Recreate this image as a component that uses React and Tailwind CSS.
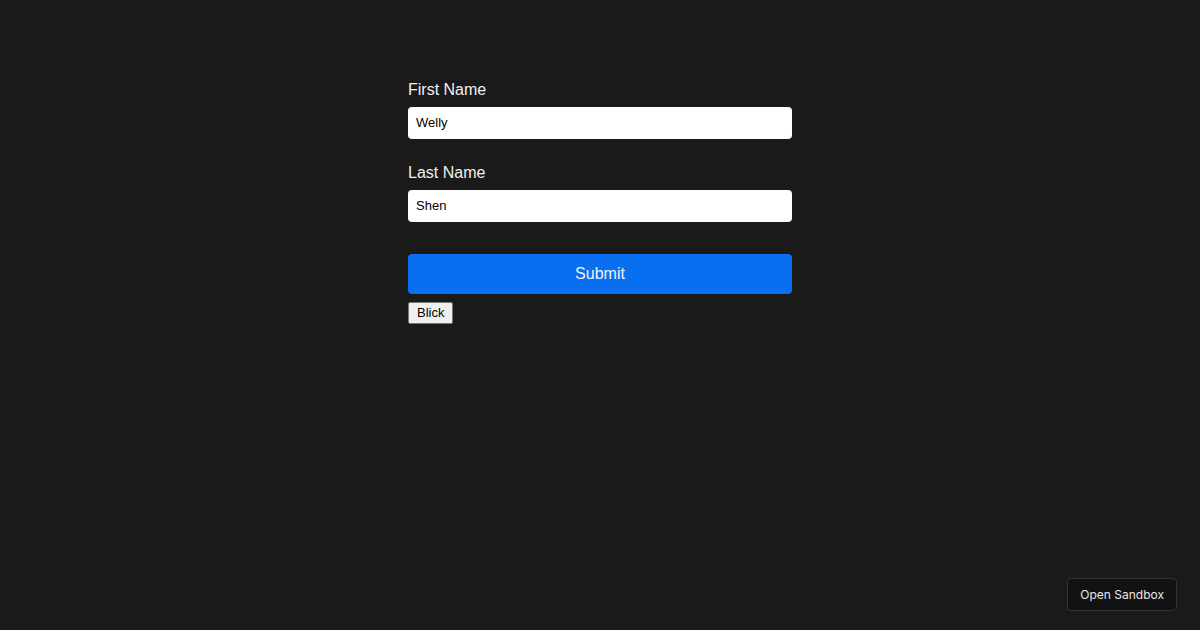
export default function App() {
  return (
    <div className="min-h-screen w-full bg-[#1a1a1a] relative" style={{ fontFamily: '"Liberation Sans", Arial, sans-serif' }}>
      <div className="w-[384px] mx-auto pt-[78px] flex flex-col">
        <label className="text-[16px] leading-6 text-[#f0f0f0] h-[23px]">First Name</label>
        <input
          defaultValue="Welly"
          className="mt-[6px] h-8 w-full rounded bg-white px-2 pb-[2px] text-[13px] text-black outline-none"
        />
        <label className="mt-[22px] text-[16px] leading-6 text-[#f0f0f0] h-[23px]">Last Name</label>
        <input
          defaultValue="Shen"
          className="mt-[6px] h-8 w-full rounded bg-white px-2 pb-[2px] text-[13px] text-black outline-none"
        />
        <button className="mt-8 h-10 w-full rounded bg-[#0870f0] text-[16px] text-[#f0f0f0]">Submit</button>
        <div className="mt-2 flex">
          <button className="h-[22px] px-[8px] text-[13px] text-black bg-[#efefef] border border-[#767676] rounded-[2px]">
            Blick
          </button>
        </div>
      </div>
      <button
        className="absolute right-[23px] bottom-[19px] h-[33px] px-3 rounded bg-[#121212] border border-[#333] text-[12px] text-[#e8e8e8]"
        style={{ fontFamily: 'Inter, "Liberation Sans", sans-serif' }}
      >
        Open Sandbox
      </button>
    </div>
  );
}
